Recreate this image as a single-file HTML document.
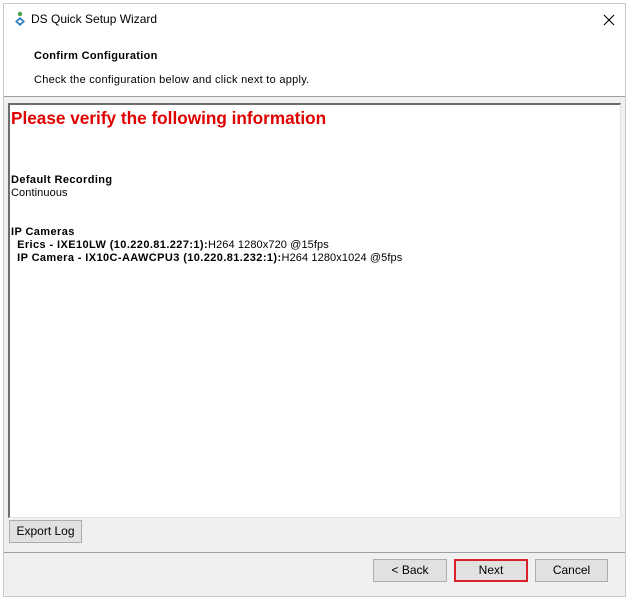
<!DOCTYPE html>
<html><head><meta charset="utf-8"><style>
*{margin:0;padding:0;box-sizing:border-box}
body{width:630px;height:601px;background:#fff;font-family:"DejaVu Sans","Liberation Sans",sans-serif;position:relative;overflow:hidden;font-size:11px;color:#000}
.win{position:absolute;left:3px;top:3px;width:623px;height:594px;border:1px solid #c8c8c8;background:#f0f0f0}
.hdr{position:absolute;left:0;top:0;width:621px;height:93px;background:#fff;border-bottom:1px solid #a0a0a0}
.abs{position:absolute;white-space:nowrap}
.box{position:absolute;left:4px;top:99px;width:613px;height:415px;background:#fff;border-left:2px solid #6d6d6d;border-top:2px solid #6d6d6d;border-right:1px solid #e3e3e3;border-bottom:1px solid #e3e3e3}
.btn{position:absolute;height:23px;background:#e1e1e1;border:1px solid #adadad;font-size:12px;font-family:"Liberation Sans",sans-serif;text-align:center;line-height:21px}
b{font-weight:bold;letter-spacing:0.4px}
.v{letter-spacing:0.1px}
</style></head><body>
<div class="win">
 <div class="hdr">
  <svg class="abs" style="left:9px;top:7px" width="14" height="16" viewBox="0 0 14 16"><circle cx="7" cy="3" r="2.2" fill="#4aa04a"/><path d="M7 6 L12 10.5 L7 15 L2 10.5Z" fill="#2d7fc4"/><path d="M7 8.5 L9.5 10.5 L7 12.5 L4.5 10.5Z" fill="#fff"/></svg>
  <div class="abs" style="left:27px;top:8px;font-size:12px;font-family:'Liberation Sans',sans-serif">DS Quick Setup Wizard</div>
  <svg class="abs" style="left:599px;top:10px" width="12" height="12" viewBox="0 0 12 12"><path d="M1 1L11 11M11 1L1 11" stroke="#000" stroke-width="1.1"/></svg>
  <div class="abs" style="left:30px;top:46px;font-weight:bold;font-size:11px;font-family:'Liberation Sans',sans-serif;letter-spacing:0.3px">Confirm Configuration</div>
  <div class="abs" style="left:30px;top:70px;font-size:11px;font-family:'Liberation Sans',sans-serif;letter-spacing:0.27px">Check the configuration below and click next to apply.</div>
 </div>
 <div class="box">
  <div class="abs" style="left:1px;top:3px;color:#e00000;font-weight:bold;font-size:17.2px;font-family:'Liberation Sans',sans-serif">Please verify the following information</div>
  <div class="abs" style="left:1px;top:69px;font-size:11px;font-family:'Liberation Sans',sans-serif;line-height:13px"><b>Default Recording</b><br><span class="v">Continuous</span></div>
  <div class="abs" style="left:1px;top:121px;font-size:11px;font-family:'Liberation Sans',sans-serif;line-height:13px"><b>IP Cameras</b><br>&nbsp;&nbsp;<b>Erics - IXE10LW (10.220.81.227:1):</b><span class="v">H264 1280x720 @15fps</span><br>&nbsp;&nbsp;<b>IP Camera - IX10C-AAWCPU3 (10.220.81.232:1):</b><span class="v">H264 1280x1024 @5fps</span></div>
 </div>
 <div class="btn" style="left:5px;top:516px;width:73px">Export Log</div>
 <div class="abs" style="left:0;top:548px;width:621px;height:1px;background:#a0a0a0"></div>
 <div class="btn" style="left:369px;top:555px;width:74px">&lt; Back</div>
 <div class="btn" style="left:450px;top:555px;width:74px;border:2px solid #d8232a;line-height:19px">Next</div>
 <div class="btn" style="left:531px;top:555px;width:73px">Cancel</div>
</div>
</body></html>
